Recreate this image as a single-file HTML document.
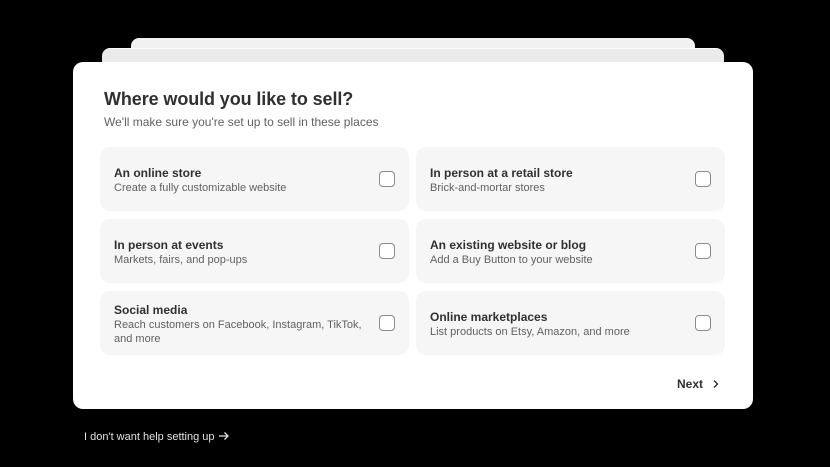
<!DOCTYPE html>
<html><head><style>
body{margin:0;width:830px;height:467px;background:#000;font-family:"Liberation Sans",sans-serif;position:relative;overflow:hidden}
.b1{position:absolute;left:131px;top:38px;width:564px;height:40px;background:#f1f1f1;border-radius:8px}
.b2{position:absolute;left:102px;top:48px;width:622px;height:40px;background:#ebebeb;border-radius:8px;border-top:1px solid #fafafa}
.card{position:absolute;left:73px;top:62px;width:680px;height:347px;background:#fff;border-radius:10px}
h1{position:absolute;left:31px;top:27px;margin:0;font-size:18px;font-weight:bold;color:#303030;letter-spacing:-0.1px}
.sub{position:absolute;left:31px;top:53px;font-size:12px;color:#616161}
.t{position:absolute;width:309px;height:64px;background:#f6f6f6;border-radius:10px}
.t .a{position:absolute;left:14px;top:19px;font-size:12px;font-weight:bold;color:#303030}
.t .d{position:absolute;left:14px;top:34px;font-size:11px;color:#616161;line-height:14px;width:260px}
.t .c{position:absolute;right:14px;top:24px;width:14px;height:14px;border:1px solid #8a8a8a;border-radius:4px;background:#fff}
.next{position:absolute;left:604px;top:315px;font-size:12px;color:#303030;font-weight:bold}
.skip{position:absolute;left:84px;top:431px;font-size:11px;color:#e3e3e3}
</style></head><body>
<div class="b1"></div><div class="b2"></div>
<div class="card">
<h1>Where would you like to sell?</h1>
<div class="sub">We'll make sure you're set up to sell in these places</div>
<div class="t" style="left:27px;top:85px"><div class="a">An online store</div><div class="d">Create a fully customizable website</div><div class="c"></div></div>
<div class="t" style="left:343px;top:85px"><div class="a">In person at a retail store</div><div class="d">Brick-and-mortar stores</div><div class="c"></div></div>
<div class="t" style="left:27px;top:157px"><div class="a">In person at events</div><div class="d">Markets, fairs, and pop-ups</div><div class="c"></div></div>
<div class="t" style="left:343px;top:157px"><div class="a">An existing website or blog</div><div class="d">Add a Buy Button to your website</div><div class="c"></div></div>
<div class="t" style="left:27px;top:229px"><div class="a" style="top:12px">Social media</div><div class="d" style="top:27px">Reach customers on Facebook, Instagram, TikTok, and more</div><div class="c"></div></div>
<div class="t" style="left:343px;top:229px"><div class="a">Online marketplaces</div><div class="d">List products on Etsy, Amazon, and more</div><div class="c"></div></div>
<div class="next">Next <svg width="10" height="10" viewBox="0 0 10 10" style="margin-left:5px;vertical-align:-1px"><path d="M3 1.5L6.5 5 3 8.5" fill="none" stroke="#303030" stroke-width="1.4"/></svg></div>
</div>
<div class="skip">I don't want help setting up <svg width="12" height="10" viewBox="0 0 12 10" style="vertical-align:-1px"><path d="M1 5h9M6.5 1.5L10 5 6.5 8.5" fill="none" stroke="#e3e3e3" stroke-width="1.3"/></svg></div>
</body></html>
